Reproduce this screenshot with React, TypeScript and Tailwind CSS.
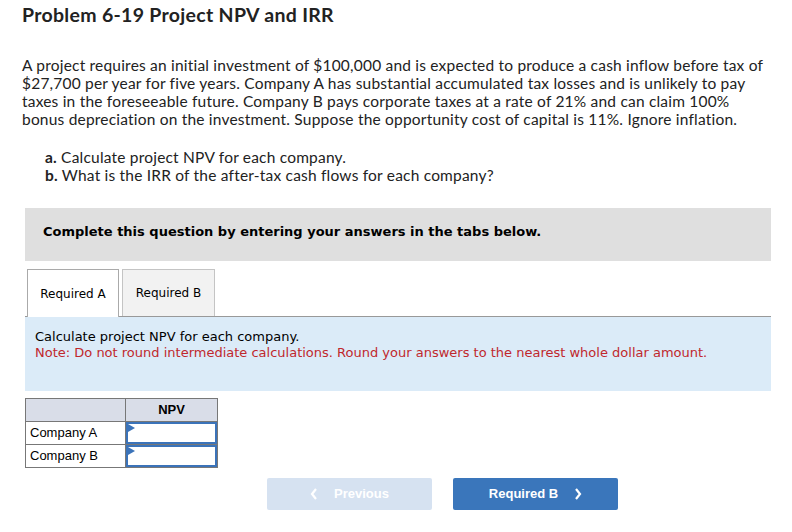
import React from 'react';

const Triangle = () => (
  <svg className="absolute left-0 top-0" width="7" height="9" viewBox="0 0 7 9">
    <path d="M0 0 L7 4 L0 8 Z" fill="#3b73b9" />
  </svg>
);

export default function App() {
  return (
    <div className="w-[792px] h-[532px] bg-white overflow-hidden" style={{ fontFamily: 'Lato, sans-serif' }}>
      <div className="pl-[22px] pt-[3px]">
        <h1 className="text-[19.5px] font-bold text-[#222] leading-[24px] tracking-[0.3px]">Problem 6-19 Project NPV and IRR</h1>

        <p className="mt-[29px] text-[15.5px] leading-[18px] text-[#222] w-[765px] tracking-[0.2px]">
          A project requires an initial investment of $100,000 and is expected to produce a cash inflow before tax of
          <br />
          $27,700 per year for five years. Company A has substantial accumulated tax losses and is unlikely to pay
          <br />
          taxes in the foreseeable future. Company B pays corporate taxes at a rate of 21% and can claim 100%
          <br />
          bonus depreciation on the investment. Suppose the opportunity cost of capital is 11%. Ignore inflation.
        </p>

        <div className="mt-[20px] pl-[23px] text-[15.5px] leading-[18px] text-[#222] tracking-[0.2px]">
          <div><span className="font-bold">a.</span> Calculate project NPV for each company.</div>
          <div><span className="font-bold">b.</span> What is the IRR of the after-tax cash flows for each company?</div>
        </div>
      </div>

      <div className="ml-[25px] w-[746px]" style={{ fontFamily: '"DejaVu Sans", Verdana, sans-serif' }}>
        <div className="mt-[24px] h-[53px] bg-[#dfdfdf] pl-[18px] pt-[11px]">
          <span className="text-[13px] font-bold text-black">Complete this question by entering your answers in the tabs below.</span>
        </div>

        <div className="mt-[8px] flex items-end gap-[3px] pl-[2px] border-b border-[#999]">
          <div className="w-[92px] h-[48px] bg-white border border-b-0 border-[#aaa] flex items-center justify-center text-[12px] text-black -mb-px relative z-10">
            Required A
          </div>
          <div className="w-[93px] h-[47px] bg-[#f2f2f2] border border-b-0 border-[#c4c4c4] flex items-center justify-center text-[12px] text-black">
            Required B
          </div>
        </div>

        <div className="h-[74px] bg-[#dbebf8] pl-[10px] pt-[12px] text-[13px] leading-[16px]">
          <div className="text-black">Calculate project NPV for each company.</div>
          <div className="text-[#c0282d]">Note: Do not round intermediate calculations. Round your answers to the nearest whole dollar amount.</div>
        </div>

        <table className="mt-[7px] border-collapse text-[13px] text-black" style={{ fontFamily: '"Liberation Sans", Arial, sans-serif' }}>
          <tbody>
            <tr className="h-[23px] bg-[#d9dde8]">
              <th className="w-[100px] border border-[#777]"></th>
              <th className="w-[92px] border border-[#777] font-bold text-[13px]">NPV</th>
            </tr>
            <tr className="h-[23px]">
              <td className="border border-[#777] pl-[4px]">Company A</td>
              <td className="border border-[#777] p-0">
                <div className="relative h-[22px] border-2 border-[#3b73b9] bg-white">
                  <Triangle />
                </div>
              </td>
            </tr>
            <tr className="h-[23px]">
              <td className="border border-[#777] pl-[4px]">Company B</td>
              <td className="border border-[#777] p-0">
                <div className="relative h-[22px] border-2 border-[#3b73b9] bg-white">
                  <Triangle />
                </div>
              </td>
            </tr>
          </tbody>
        </table>

        <div className="mt-[10px] flex gap-[21px] pl-[242px]" style={{ fontFamily: '"Liberation Sans", Arial, sans-serif' }}>
          <button className="w-[165px] h-[32px] rounded-[2px] bg-[#d6e2f1] text-white font-bold text-[13px] flex items-center justify-center gap-[16px]">
            <svg width="8" height="12" viewBox="0 0 8 12"><path d="M6 1 L2 6 L6 11" stroke="white" strokeWidth="2.2" fill="none" /></svg>
            Previous
          </button>
          <button className="w-[165px] h-[32px] rounded-[2px] bg-[#3a76bb] text-white font-bold text-[13px] flex items-center justify-center gap-[16px]">
            Required B
            <svg width="8" height="12" viewBox="0 0 8 12"><path d="M2 1 L6 6 L2 11" stroke="white" strokeWidth="2.2" fill="none" /></svg>
          </button>
        </div>
      </div>
    </div>
  );
}
